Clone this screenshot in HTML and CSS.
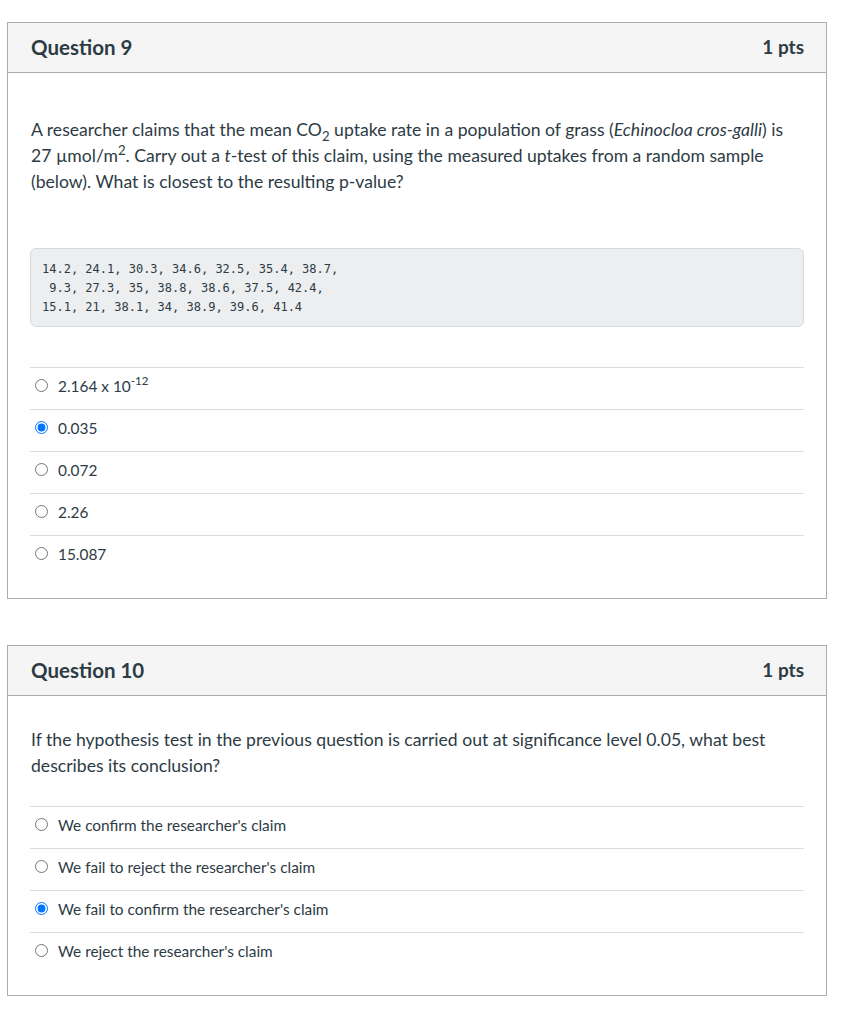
FILE: index.html
```html
<!DOCTYPE html>
<html lang="en">
<head>
<meta charset="utf-8">
<title>Quiz</title>
<link rel="stylesheet" href="styles.css">
</head>
<body>
<div class="page">
  <section class="question">
    <header class="q-header">
      <h2 class="q-title">Question 9</h2>
      <span class="q-pts">1 pts</span>
    </header>
    <div class="q-body q-body--first">
      <p class="q-text">A researcher claims that the mean CO<sub>2</sub> uptake rate in a population of grass (<em>Echinocloa cros-galli</em>) is 27 µmol/m<sup>2</sup>. Carry out a <em>t</em>-test of this claim, using the measured uptakes from a random sample (below). What is closest to the resulting p-value?</p>
      <pre class="code">14.2, 24.1, 30.3, 34.6, 32.5, 35.4, 38.7,
 9.3, 27.3, 35, 38.8, 38.6, 37.5, 42.4,
15.1, 21, 38.1, 34, 38.9, 39.6, 41.4</pre>
      <div class="answers">
        <label class="answer"><input type="radio" name="q9"><span>2.164 x 10<sup>-12</sup></span></label>
        <label class="answer"><input type="radio" name="q9" checked><span>0.035</span></label>
        <label class="answer"><input type="radio" name="q9"><span>0.072</span></label>
        <label class="answer"><input type="radio" name="q9"><span>2.26</span></label>
        <label class="answer"><input type="radio" name="q9"><span>15.087</span></label>
      </div>
    </div>
  </section>

  <section class="question">
    <header class="q-header">
      <h2 class="q-title">Question 10</h2>
      <span class="q-pts">1 pts</span>
    </header>
    <div class="q-body q-body--second">
      <p class="q-text q-text--short">If the hypothesis test in the previous question is carried out at significance level 0.05, what best describes its conclusion?</p>
      <div class="answers">
        <label class="answer"><input type="radio" name="q10"><span>We confirm the researcher's claim</span></label>
        <label class="answer"><input type="radio" name="q10"><span>We fail to reject the researcher's claim</span></label>
        <label class="answer"><input type="radio" name="q10" checked><span>We fail to confirm the researcher's claim</span></label>
        <label class="answer"><input type="radio" name="q10"><span>We reject the researcher's claim</span></label>
      </div>
    </div>
  </section>
</div>
</body>
</html>
```
FILE: styles.css
```css
* { box-sizing: border-box; }
html, body { margin: 0; padding: 0; background: #fff; }
body {
  font-family: Lato, "Noto Sans", "Liberation Sans", sans-serif;
  color: #2d3b45;
}
.page {
  padding: 22px 0 0 7px;
  width: 827px;
  display: flex;
  flex-direction: column;
  gap: 46px;
}
.question {
  border: 1px solid #a7adb1;
  background: #fff;
}
.q-header {
  height: 50px;
  background: #f5f5f5;
  border-bottom: 1px solid #a7adb1;
  display: flex;
  align-items: center;
  justify-content: space-between;
  padding: 0 22px 2px 23px;
}
.q-title {
  margin: 0;
  font-size: 20.5px;
  font-weight: 700;
  color: #2d3b45;
}
.q-pts {
  font-size: 19px;
  font-weight: 700;
  color: #2d3b45;
}
.q-body {
  padding: 0 22px 21px 22px;
}
.q-body--first { padding-top: 44px; }
.q-body--second { padding-top: 31px; }
.q-text {
  margin: 0 0 0 1px;
  font-size: 17.6px;
  line-height: 26px;
}
.q-text sub, .q-text sup, .answer sup {
  font-size: 0.75em;
  line-height: 0;
}
.code {
  margin: 53px 0 40px 0;
  padding: 11px 11px 9px;
  background: #eceef0;
  border: 1px solid #d6d9dc;
  border-radius: 6px;
  font-family: "DejaVu Sans Mono", "Liberation Mono", monospace;
  font-size: 12px;
  line-height: 19px;
  color: #2d3b45;
  white-space: pre;
}
.q-text--short { margin-bottom: 27px; }
.answers {
  display: flex;
  flex-direction: column;
}
.answer {
  display: flex;
  align-items: center;
  height: 42px;
  border-top: 1px solid #dadcde;
  font-size: 15.4px;
  padding-bottom: 6px;
}
.answer input {
  margin: 0 10px 0 5px;
  width: 13px;
  height: 13px;
}
.answer sup { vertical-align: 0.6em; }
```
